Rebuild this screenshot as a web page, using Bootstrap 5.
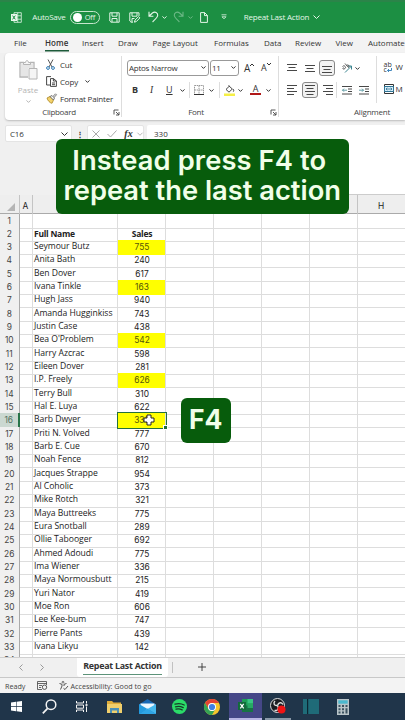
<!DOCTYPE html>
<html lang="en">
<head>
  <meta charset="UTF-8" />
  <meta name="viewport" content="width=device-width, initial-scale=1" />
  <title>Repeat Last Action</title>
  <link href="https://cdn.jsdelivr.net/npm/bootstrap@5.3.0/dist/css/bootstrap.min.css" rel="stylesheet" />
  <style>
    body {
      width: 405px;
      height: 720px;
      background: #f0f0f0;
      color: #333;
      font-family: "Open Sans", "Noto Sans", sans-serif;
      font-size: 8px;
      line-height: 12px;
    }
    svg { display: block; flex: none; fill: none; stroke: currentColor; overflow: visible; }
    .slots { display: grid; align-items: center; justify-items: center; }
    .chev { width: 5px; height: 3px; }

    /* title bar */
    .titlebar {
      height: 33px;
      background: #1c8f43;
      border-top: 2px solid #2b8449;
      color: #e4f6e8;
      grid-template-columns: 32px 34px 38px 20px 20px 18px 4px 24px 0 28px 11px 81px 12px;
      letter-spacing: -.2px;
      padding-bottom: 1px;
    }
    .switch-pill {
      width: 30px;
      height: 13px;
      border: 1px solid #c6e6cd;
      border-radius: 7px;
      padding: 0 4px 0 2px;
      font-size: 7.5px;
    }
    .knob { width: 9px; height: 9px; border-radius: 50%; background: #fff; }
    .doc-name { margin-left: 14px; }

    /* ribbon */
    .tabs {
      height: 20px;
      background: #f3f3f3;
      grid-template-columns: 31px 37px 36px 34.5px 61.5px 50px 31px 40.5px 32.5px 37px;
      justify-items: start;
      padding-left: 14px;
      white-space: nowrap;
    }
    .tab-on { font-weight: 600; box-shadow: 0 1.5px #1d5b3a; height: 13px; letter-spacing: .1px; }
    .ribbon {
      height: 67px;
      margin-left: 5px;
      background: #fff;
      border-radius: 4px 0 0 4px;
      box-shadow: 0 1px 2px #bbb;
      white-space: nowrap;
    }
    .group { border-right: 1px solid #ddd; height: 61px; margin-top: 3px; flex: none; }
    .g-clip { width: 117px; }
    .g-font { width: 157px; }
    .g-align { width: 126px; border: 0; }
    .group-body { height: 51px; }
    .caption { height: 12px; margin-top: -1px; color: #444; letter-spacing: -.3px; }
    .g-align .caption { padding-left: 75px; letter-spacing: -.2px; }
    .launcher { margin-left: auto; margin-right: 1px; }
    .faded { color: #b4b4b4; width: 35px; padding: 4px 0 0 11px; }
    .clip-list { padding-left: 6px; }
    .clip-list > div { height: 17px; grid-template-columns: 11px auto 1fr; justify-items: start; column-gap: 3px; letter-spacing: -.2px; }
    .font-top { height: 22px; padding: 1px 0 0 5px; }
    .pick { height: 16px; border: 1px solid #999; border-radius: 3px; padding: 0 2px 0 1px; letter-spacing: -.25px; }
    .pick-name { width: 82px; }
    .pick-size { width: 29px; margin-left: 1px; }
    .size-a { font-size: 10px; margin-left: 5px; width: 13px; }
    .size-b { font-size: 9px; margin-left: 4px; }
    .font-row { height: 24px; padding-left: 10px; grid-template-columns: 18px 16px 14px 9px 5px 14.5px 10px 5.5px 14px 12px 16px 5px; justify-items: start; font-size: 9px; }
    .ital { font: italic 9.5px "Liberation Serif", serif; }
    .rule { width: 1px; height: 16px; background: #ddd; }
    .letter-a { line-height: 8px; border-bottom: 2.5px solid #b01818; width: 11px; text-align: center; }
    .align-part { width: 97.5px; height: 47px; border-right: 1px solid #ddd; padding-left: 7.5px; flex: none; }
    .align-part .slots { justify-items: start; }
    .align-top { height: 24px; grid-template-columns: 18px 14px 22px 14px 6px; }
    .align-row { height: 20px; grid-template-columns: 15px 21px 13px 6px 17px 10px; }
    .hot { width: 16px; height: 16px; border: 1px solid #888; border-radius: 3px; background: #f2f2f2; display: grid; place-items: center; }
    .wrap-part { padding-left: 7px; }
    .wrap-part > div { height: 22px; gap: 2px; }
    .tiny { font-size: 7px; line-height: 5px; width: 10px; }

    /* formula bar */
    .formula { height: 75px; padding: 5px 0 0 5px; }
    .fbox { height: 17px; background: #fff; border-radius: 2px; border: 1px solid #e4e4e4; }
    .f-name { width: 67px; padding: 0 3px 0 4px; letter-spacing: -.2px; }
    .dots { width: 15px; text-align: center; line-height: 17px; font-weight: 700; }
    .f-tools { width: 57px; grid-template-columns: 16px 16px 17px 6px; }
    .f-tools svg { color: #aaa; }
    .fx { font: italic bold 10px "Liberation Serif", serif; color: #333; }
    .f-value { height: 70px; margin-left: 3px; padding: 3px 7px; background: #fff; border-bottom: 1px solid #ccc; border-radius: 2px 0 0 0; }

    /* grid */
    .sheet { height: 462px; overflow: hidden; background: #fff; color: #222; }
    .line-row { display: grid; grid-template-columns: 19.5px 13px 85px 48px 48px 48px 48px 48px 48px; height: 13.333px; }
    .line-row > div { border-right: 1px solid #ddd; border-bottom: 1px solid #ddd; line-height: 14px; white-space: nowrap; text-align: center; font-family: Inter, Roboto, sans-serif; font-size: 8.4px; }
    .line-row > .rownum { background: #f0f0f0; border-color: #c9c9c9; color: #444; border-right-color: #aaa; }
    .line-row > .person { text-align: left; padding-left: 1.5px; font-family: "Open Sans", sans-serif; letter-spacing: -.03px; font-size: 8.6px; line-height: 13px; }
    .line-row > .sales { padding-left: 2px; }
    .line-row > .filled { background: #ff0; border-bottom-color: #ff0; color: #55550a; }
    .line-row.heads { height: 18.5px; background: #eee; border-bottom: 1px solid #aaa; }
    .line-row.heads > div { border-bottom: 0; border-color: #c4c4c4; line-height: 22px; }
    .line-row.bolded > div:not(.rownum) { font-weight: 700; letter-spacing: -.25px; font-family: "Open Sans", sans-serif; font-size: 8.5px; line-height: 13px; }
    .line-row > .rownum.active { background: #cbd8d1; color: #52715f; border-right: 2px solid #287449; }
    .line-row > .picked { position: relative; outline: 1.5px solid #23703c; outline-offset: -.5px; z-index: 1; }
    .handle { position: absolute; right: -3px; bottom: -3px; background: #1f6e3c; border: 1px solid #fff; box-sizing: content-box; width: 3px; height: 3px; }
    .pointer { position: absolute; left: 25px; top: 1px; }

    /* bottom bars */
    .sheet-tabs { height: 21px; border-top: 1px solid #d0d0d0; border-bottom: 1px solid #c8c8c8; }
    .tab-arrows { width: 77px; gap: 17px; padding-left: 19px; color: #999; }
    .sheet-tab { width: 91px; height: 19px; background: #fff; border-radius: 0 0 3px 3px; padding-top: 1px; }
    .sheet-tab span { font-weight: 700; border-bottom: 1.5px solid #5c9379; line-height: 14px; height: 16px; white-space: nowrap; letter-spacing: -.25px; font-size: 8.9px; }
    .add-tab { margin: 5px 0 0 25px; }
    .status { height: 15px; background: #f3f3f3; font-size: 7.2px; color: #444; padding-left: 5px; white-space: nowrap; }
    .status svg { margin-right: 2px; }
    .taskbar { height: 27px; background: #20354a; color: #f4f4f4; grid-template-columns: repeat(11, 32.7px); align-items: stretch; justify-items: stretch; }
    .taskbar > div { display: grid; place-items: center; }
    .task-on { background: #454787; border-bottom: 2px solid #b9b6e4; }
    .task-run { border-bottom: 2px solid #8999a8; margin: 0 3px; }

    /* captions over the sheet */
    .banner, .key {
      position: absolute;
      background: #075c0c;
      color: #f1ffe9;
      font-family: Inter, "Open Sans", sans-serif;
      font-weight: 600;
      text-align: center;
      border-radius: 6px;
      z-index: 5;
      white-space: nowrap;
    }
    .banner { left: 55.5px; top: 139px; width: 293.5px; height: 74.5px; font-size: 27.3px; line-height: 30px; padding-top: 6.5px; }
    .banner div:first-child { letter-spacing: .1px; margin-left: -6px; }
    .key { left: 181px; top: 398px; width: 49.5px; height: 45px; font-size: 26.5px; line-height: 43px; font-weight: 700; }
  </style>
</head>
<body class="position-relative overflow-hidden m-0">

<svg width="0" height="0" class="position-absolute">
  <symbol id="chev" viewBox="0 0 5 3"><path d="M.5 .4 2.5 2.4 4.5 .4" /></symbol>
  <symbol id="launch" viewBox="0 0 7 7"><path d="M1 5.5V1h4.5M3 3l3 3M6 3v3H3" stroke-width=".9" /></symbol>
</svg>

<header class="titlebar slots">
  <svg width="11" height="11" viewBox="0 0 11 11"><path d="M3 2V.7h7.3v9.6H3V9M3 3.8h7M3 7.2h7M6.7.7v9.6" stroke-width=".8" /><path d="M0 2h6v7H0z" fill="#e9f7ec" stroke="none" /><path d="m1.6 3.6 2.7 3.8m0-3.8L1.6 7.4" stroke="#1c8f43" /></svg>
  <span>AutoSave</span>
  <div class="switch-pill d-flex align-items-center justify-content-between"><span class="knob"></span><span>Off</span></div>
  <svg width="11" height="11" viewBox="0 0 11 11"><path d="M.8.8h9.4v9.4H2L.8 9zM3 .8v3.4h5V.8M3 10V6.5h5V10" /></svg>
  <svg width="11" height="11" viewBox="0 0 11 11"><path d="M10 4V.8H.8V9L2 10.2h2M3 .8v3.4h5V.8M3 10V6.5h2.5M5.4 10.2l.7-2.2L9.5 4.6l1.4 1.3-3.5 3.6z" /></svg>
  <svg width="11" height="12" viewBox="0 0 11 12"><path d="M1 .8v4.4h4.4M1.2 5 4.4 2C7 0 10 1.7 9.7 4.5 9.5 6.3 7 8.5 4.6 11" stroke-width="1.1" /></svg>
  <svg class="chev"><use href="#chev" /></svg>
  <svg width="11" height="12" viewBox="0 0 11 12" opacity=".4"><path d="M10 .8v4.4H5.6M9.8 5 6.6 2C4 0 1 1.7 1.3 4.5 1.5 6.3 4 8.5 6.4 11" stroke-width="1.1" /></svg>
  <svg class="chev" opacity=".4"><use href="#chev" /></svg>
  <svg width="8" height="11" viewBox="0 0 8 11"><path d="M.6.6h4L7.4 3.4v7H.6zM4.5.6v3h3" /></svg>
  <svg width="6" height="6" viewBox="0 0 6 6"><path d="M.5.8h5M1 2.8l2 2 2-2z" stroke-width=".8" /></svg>
  <span class="doc-name text-nowrap">Repeat Last Action</span>
  <svg width="7" height="4" viewBox="0 0 7 4"><path d="m.5.5 3 3 3-3" /></svg>
</header>

<nav class="tabs slots">
  <span>File</span><span class="tab-on">Home</span><span>Insert</span><span>Draw</span><span>Page Layout</span>
  <span>Formulas</span><span>Data</span><span>Review</span><span>View</span><span>Automate</span>
</nav>

<section class="ribbon d-flex overflow-hidden">
  <div class="group g-clip">
    <div class="group-body d-flex">
      <div class="faded d-flex flex-column align-items-center">
        <svg width="19" height="20" viewBox="0 0 19 20"><path d="M9 17H1V2.5h4M11 2.5h4V8" stroke-width="1.3" /><path d="M2 4h12v4H9v8H2z" fill="#e6e6e6" stroke="none" /><path d="M4.5 4.5V2.5H6.5C6.5 0 9.5 0 9.5 2.5h2v2zM10 8.5h8V19h-8z" fill="#f5f5f5" /></svg>
        <span class="mt-1">Paste</span>
        <svg class="chev mt-1"><use href="#chev" /></svg>
      </div>
      <div class="clip-list">
        <div class="slots">
          <svg width="9" height="11" viewBox="0 0 9 11"><path d="m2 .5 4 7.5M7 .5 3 8" stroke="#555" /><circle cx="2" cy="9" r="1.4" stroke="#2d7ab5" /><circle cx="7" cy="9" r="1.4" stroke="#2d7ab5" /></svg>
          <span>Cut</span>
        </div>
        <div class="slots">
          <svg width="11" height="11" viewBox="0 0 11 11"><path d="M4 9H.6V.6H5M4.5 2.6h3L10.4 5v5.4H4.500zM7.4 2.6V5h3M6 7h3M6 8.7h3" stroke-width=".9" /></svg>
          <span>Copy</span><svg class="chev ms-1"><use href="#chev" /></svg>
        </div>
        <div class="slots">
          <svg width="11" height="11" viewBox="0 0 11 11"><path d="m1 5 3-1.5L7.5 7 6 10.3C4 10 1.5 7.5 1 5z" fill="#f3d26b" stroke="#a98524" stroke-width=".8" /><path d="m4 3.5 2-1L8.5 5l-1 2zM7 3.5 9.5.8l1 1L8 4.5" fill="#fff" stroke="#555" stroke-width=".8" /></svg>
          <span>Format Painter</span>
        </div>
      </div>
    </div>
    <div class="caption d-flex align-items-center"><span class="ms-auto">Clipboard</span><svg class="launcher" width="7" height="7"><use href="#launch" /></svg></div>
  </div>

  <div class="group g-font">
    <div class="group-body">
      <div class="font-top d-flex align-items-center">
        <div class="pick pick-name d-flex align-items-center justify-content-between">Aptos Narrow <svg class="chev"><use href="#chev" /></svg></div>
        <div class="pick pick-size d-flex align-items-center justify-content-between">11 <svg class="chev"><use href="#chev" /></svg></div>
        <div class="size-a d-flex">A<svg width="4" height="3" viewBox="0 0 4 3"><path d="m0 4 2-2 2 2" /></svg></div>
        <div class="size-b d-flex">A<svg width="4" height="3" viewBox="0 0 4 3"><path d="m0 1 2 2 2-2" /></svg></div>
      </div>
      <div class="font-row slots">
        <b>B</b><span class="ital">I</span><u>U</u>
        <svg class="chev"><use href="#chev" /></svg><i class="rule"></i>
        <svg width="10" height="10" viewBox="0 0 10 10"><path d="M.5.5h9v9h-9zM5 .5v9M.5 5h9" stroke="#999" stroke-dasharray="1.5 .7" /><path d="M0 9.5h10" stroke="#333" /></svg>
        <svg class="chev"><use href="#chev" /></svg><i class="rule"></i>
        <svg width="11" height="11" viewBox="0 0 11 11"><path d="M4.5.5 8.3 4 5 7.2 2 4.4 5.5 1M9 4c1.5 2 .5 2.5 0 2.5" stroke-width=".9" /><path d="M0 9.7h11" stroke="#f5ef45" stroke-width="2.6" /></svg>
        <svg class="chev"><use href="#chev" /></svg>
        <span class="letter-a">A</span>
        <svg class="chev"><use href="#chev" /></svg>
      </div>
    </div>
    <div class="caption d-flex align-items-center"><span class="ms-auto">Font</span><svg class="launcher" width="7" height="7"><use href="#launch" /></svg></div>
  </div>

  <div class="group g-align">
    <div class="group-body d-flex">
      <div class="align-part">
        <div class="align-top slots">
          <svg width="10" height="10" viewBox="0 0 10 10"><path d="M0 1.5h10M1.5 4.5h7M0 7.5h10" stroke-width=".9" /></svg>
          <svg width="10" height="10" viewBox="0 0 10 10"><path d="M0 2.5h10M1.5 5.5h7M0 8.5h10" stroke-width=".9" /></svg>
          <span class="hot"><svg width="10" height="10" viewBox="0 0 10 10"><path d="M0 9.5h10M1.5 6.5h7M0 3.5h10" stroke-width=".9" /></svg></span>
          <svg width="11" height="10" viewBox="0 0 11 10"><path d="M4 9.5 10.5 3M7 3h3.5v3.5" stroke="#3b8590" /><path d="M1.5 3.5c2-2 4 1 2.5 2S1 6 2.5 4.5M4 .5l3.5 4C9 3 7 1 5.5 2.5" stroke-width=".8" /></svg>
          <svg class="chev"><use href="#chev" /></svg>
        </div>
        <div class="align-row slots">
          <svg width="10" height="10" viewBox="0 0 10 10"><path d="M0 .5h10M0 3.5h7M0 6.5h10M0 9.5h7" stroke-width=".9" /></svg>
          <span class="hot"><svg width="10" height="10" viewBox="0 0 10 10"><path d="M0 .5h10M1.5 3.5h7M0 6.5h10M1.5 9.5h7" stroke-width=".9" /></svg></span>
          <svg width="10" height="10" viewBox="0 0 10 10"><path d="M0 .5h10M3 3.5h7M0 6.5h10M3 9.5h7" stroke-width=".9" /></svg>
          <i class="rule"></i>
          <svg width="10" height="10" viewBox="0 0 10 10"><path d="M0 1.5h10M6 4h4M6 6.5h4M0 9h10" stroke-width=".9" /><path d="M5 5.2H.5M2 3.7.5 5.2 2 6.7" stroke="#3b8590" stroke-width=".8" /></svg>
          <svg width="10" height="10" viewBox="0 0 10 10"><path d="M0 1.5h10M6 4h4M6 6.5h4M0 9h10" stroke-width=".9" /><path d="M0 5.2h4.5M3 3.7l1.5 1.5L3 6.7" stroke="#3b8590" stroke-width=".8" /></svg>
        </div>
      </div>
      <div class="wrap-part">
        <div class="d-flex align-items-center">
          <div class="tiny">ab<br />c<svg class="d-inline-block" width="5" height="4" viewBox="0 0 5 4"><path d="M4.5 0v2.5H.5M2 1 .5 2.5 2 4" stroke="#2d7ab5" stroke-width=".9" /></svg></div>
          <span>W</span>
        </div>
        <div class="d-flex align-items-center">
          <svg width="10" height="10" viewBox="0 0 10 10"><path d="M.5.5h9v9h-9z" /><path d="M.5 2.5h9v5h-9z" fill="#d9edf8" stroke="#2f7596" /><path d="M2 5h6M3.3 3.7 2 5l1.3 1.3M6.7 3.7 8 5 6.7 6.3" stroke="#2f7596" stroke-width=".8" /></svg>
          <span>M</span>
        </div>
      </div>
    </div>
    <div class="caption">Alignment</div>
  </div>
</section>

<section class="formula d-flex">
  <div class="fbox f-name d-flex align-items-center justify-content-between">C16 <svg width="7" height="4" viewBox="0 0 7 4"><path d="m.5.5 3 3 3-3" /></svg></div>
  <div class="dots">⋮</div>
  <div class="fbox f-tools slots">
    <svg width="8" height="8" viewBox="0 0 8 8"><path d="m.5.5 7 7M7.5.5l-7 7" /></svg>
    <svg width="10" height="8" viewBox="0 0 10 8"><path d="M.5 4 3.5 7l6-6.5" /></svg>
    <span class="fx">fx</span>
    <svg width="6" height="4" viewBox="0 0 7 4"><path d="m.5.5 3 3 3-3" /></svg>
  </div>
  <div class="f-value flex-grow-1">330</div>
</section>

<main class="sheet" id="sheet">
  <div class="line-row heads">
    <div><svg class="ms-auto mt-2 me-1" width="8" height="8" viewBox="0 0 8 8"><path d="M8 0v8H0z" fill="#b5b5b5" stroke="none" /></svg></div>
    <div>A</div><div></div><div></div><div></div><div></div><div></div><div></div><div>H</div>
  </div>
</main>

<section class="sheet-tabs d-flex">
  <div class="tab-arrows d-flex align-items-center">
    <svg width="4" height="7" viewBox="0 0 4 7"><path d="m3.5.5-3 3 3 3" /></svg>
    <svg width="4" height="7" viewBox="0 0 4 7"><path d="m.5.5 3 3-3 3" /></svg>
  </div>
  <div class="sheet-tab d-flex justify-content-center"><span>Repeat Last Action</span></div>
  <div class="vr my-1 ms-1"></div>
  <svg class="add-tab" width="8" height="8" viewBox="0 0 8 8"><path d="M4 0v8M0 4h8" stroke-width=".9" /></svg>
</section>

<footer class="status d-flex align-items-center">
  <span>Ready</span>
  <svg class="ms-2" width="16" height="9" viewBox="-4 0 16 9"><path d="M5 8.5H.5v-8h9V4M.5 2.5h9M2 4.500h3M2 6.5h2" stroke-width=".8" /><circle cx="7.5" cy="6.2" r="2.2" stroke-width=".9" /></svg>
  <svg class="ms-2" width="9" height="9" viewBox="0 0 9 9"><circle cx="4" cy="1.2" r=".9" stroke-width=".7" /><path d="M.5 2.5 3 3.3V5L1.5 8.5M7.5 2.5 5 3.3V5M4.5 7.3 6 8.5l3-3.5" stroke-width=".9" /></svg>
  <span>Accessibility: Good to go</span>
</footer>

<footer class="taskbar slots">
  <div><svg width="11" height="11" viewBox="0 0 11 11"><path d="m0 1.5 5-.7v4.5H0zM5.6.7 11 0v5.3H5.6zM0 5.9h5v4.4l-5-.7zM5.6 5.9H11V11l-5.4-.7z" fill="#fff" stroke="none" /></svg></div>
  <div><svg width="15" height="15" viewBox="0 0 15 15"><circle cx="9" cy="5.7" r="4.8" stroke-width="1.5" /><path d="M5.6 9.3.8 14.3" stroke-width="1.7" /></svg></div>
  <div><svg width="12" height="11" viewBox="0 0 12 11"><path d="M.5 0v2h7V0M.5 11V9h7v2M.5 4h7v3.2h-7zM10.5 0v2.5M10.5 5.5V11" /><path d="M9.5 4h2" stroke-width="1.8" /></svg></div>
  <div><svg width="15" height="12" viewBox="0 0 15 12" stroke="none"><path d="M0 0h5l1.5 1.5H14V12H0z" fill="#e0ad3a" stroke="none" /><path d="M0 3h15v9H0z" fill="#f0cf6c" stroke="none" /><path d="M3 7h9v5h-2V9.5H5V12H3z" fill="#4a90b8" stroke="none" /></svg></div>
  <div><svg width="17" height="15" viewBox="0 0 17 15"><g stroke="none"><path d="M0 5.5 8.5 0 17 5.5V15H0z" fill="#1768b5" /><path d="M1.5 4.5h14V11h-14z" fill="#eaf6ff" /><path d="m0 5 8.500 5L0 15z" fill="#239ade" /><path d="m17 5-8.500 5L17 15z" fill="#46b8ee" /><path d="m0 15 8.500-5.500L17 15z" fill="#2fa5e5" /></g></svg></div>
  <div><svg width="15" height="15" viewBox="0 0 15 15"><circle cx="7.5" cy="7.5" r="7.5" fill="#2bdc69" stroke="none" /><path d="M3 5.2c3-1 6.5-.7 9.2.8M3.5 7.8c2.5-.8 5.3-.5 7.7.8M4 10.2c2-.6 4.3-.4 6.2.7" stroke="#163b28" stroke-width="1.3" stroke-linecap="round" /></svg></div>
  <div><svg width="16" height="16" viewBox="0 0 16 16"><g stroke="none"><circle cx="8" cy="8" r="8" fill="#f6c52c" /><path d="M1.07 4A8 8 0 0 1 14.93 4H8A4 4 0 0 0 4.54 10z" fill="#e44335" /><path d="M1.07 4A8 8 0 0 0 8 16L11.46 10A4 4 0 0 1 4.54 10z" fill="#35a455" /><circle cx="8" cy="8" r="4" fill="#fff" /><circle cx="8" cy="8" r="3.1" fill="#3f80e5" /></g></svg></div>
  <div class="task-on"><svg width="15" height="13" viewBox="0 0 15 13"><g stroke="none"><path d="M4 0h11v13H4z" fill="#1b9e55" /><path d="M9.5 0H15v4.5H9.500z" fill="#38c583" /><path d="M4 6.5h11V13H4z" fill="#177344" /><path d="M9.5 4.5H15V9H9.500z" fill="#27a963" /><path d="M0 3h8v8H0z" fill="#126b3a" /></g><path d="m2.3 4.8 3.4 4.5m0-4.5L2.3 9.3" stroke="#fff" stroke-width="1.2" /></svg></div>
  <div class="task-run"><svg width="16" height="16" viewBox="0 0 16 16"><circle cx="7.5" cy="7.5" r="7" fill="#191d22" stroke="#ddd" /><path d="M7.5 7.5C4 8 3 5 5 3M7.5 7.5c1-3.5 4-3.5 5.5-1M7.5 7.5c2 3 0 5.5-3 5" stroke="#ddd" stroke-width="1.4" /><circle cx="11.5" cy="11.5" r="4" fill="#f01414" stroke="none" /></svg></div>
  <div><svg width="16" height="15" viewBox="0 0 16 15"><g stroke="none"><path d="M0 0h16v15H0z" fill="#1f6b78" /><path d="M4 0h1.2v15H4z" fill="#0c2632" /></g></svg></div>
  <div><svg width="12" height="16" viewBox="0 0 12 16"><g stroke="none"><path d="M0 0h12v16H0z" fill="#b9c4c8" /><path d="M1.3 1.3h9.4v3.4H1.300z" fill="#4bb9cf" /><path d="M1.5 6h2v2h-2zM5 6h2v2H5zM8.5 6h2v2h-2zM1.5 9.3h2v2h-2zM5 9.3h2v2H5zM1.5 12.5h2v2h-2zM5 12.5h2v2H5zM8.5 9.3h2v5.2h-2z" fill="#3c5361" /></g></svg></div>
</footer>

<div class="banner"><div>Instead press F4 to</div><div>repeat the last action</div></div>
<div class="key">F4</div>

<script src="https://cdn.jsdelivr.net/npm/bootstrap@5.3.0/dist/js/bootstrap.bundle.min.js"></script>
<script>
  const people = [
    ['Seymour Butz', 755], ['Anita Bath', 240], ['Ben Dover', 617], ['Ivana Tinkle', 163],
    ['Hugh Jass', 940], ['Amanda Hugginkiss', 743], ['Justin Case', 438], ["Bea O'Problem", 542],
    ['Harry Azcrac', 598], ['Eileen Dover', 281], ['I.P. Freely', 626], ['Terry Bull', 310],
    ['Hal E. Luya', 622], ['Barb Dwyer', 330], ['Priti N. Volved', 777], ['Barb E. Cue', 670],
    ['Noah Fence', 812], ['Jacques Strappe', 954], ['Al Coholic', 373], ['Mike Rotch', 321],
    ['Maya Buttreeks', 775], ['Eura Snotball', 289], ['Ollie Tabooger', 692], ['Ahmed Adoudi', 775],
    ['Ima Wiener', 336], ['Maya Normousbutt', 215], ['Yuri Nator', 419], ['Moe Ron', 606],
    ['Lee Kee-bum', 747], ['Pierre Pants', 439], ['Ivana Likyu', 142]
  ];
  const filled = [3, 6, 10, 13, 16];
  const activeRow = 16;
  const sheet = document.getElementById('sheet');

  function addRow(num, name, sales) {
    const row = document.createElement('div');
    row.className = 'line-row' + (num === 2 ? ' bolded' : '');
    const active = num === activeRow;
    const salesClass = 'sales' + (filled.includes(num) ? ' filled' : '') + (active ? ' picked' : '');
    const extra = active
      ? `<svg class="pointer" width="12" height="12" viewBox="0 0 12 12"><path d="M4 1h4v3h3v4H8v3H4V8H1V4h3z" fill="#fff" stroke="#222" /></svg><i class="handle"></i>`
      : '';
    row.innerHTML = `<div class="rownum${active ? ' active' : ''}">${num}</div><div></div>
      <div class="person">${name}</div><div class="${salesClass}">${sales}${extra}</div>` + '<div></div>'.repeat(5);
    sheet.appendChild(row);
  }

  addRow(1, '', '');
  addRow(2, 'Full Name', 'Sales');
  people.forEach((p, i) => addRow(i + 3, p[0], p[1]));
  addRow(34, '', '');
</script>
</body>
</html>
